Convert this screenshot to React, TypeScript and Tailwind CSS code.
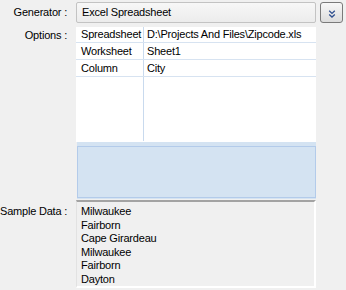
import * as React from 'react';

const rows = [
  { name: 'Spreadsheet', value: 'D:\\Projects And Files\\Zipcode.xls' },
  { name: 'Worksheet', value: 'Sheet1' },
  { name: 'Column', value: 'City' },
];

const samples = ['Milwaukee', 'Fairborn', 'Cape Girardeau', 'Milwaukee', 'Fairborn', 'Dayton'];

function ChevronsIcon() {
  return (
    <svg width="8" height="8" viewBox="0 0 8 8" fill="none">
      <polyline points="1.2,0.8 4,3.4 6.8,0.8" stroke="#2f4f8f" strokeWidth="1.3" />
      <polyline points="1.2,4.4 4,7 6.8,4.4" stroke="#2f4f8f" strokeWidth="1.3" />
    </svg>
  );
}

export default function App() {
  return (
    <div
      className="w-[346px] h-[290px] bg-[#f0f0f0] text-[11px] tracking-[-0.2px] text-black overflow-hidden whitespace-nowrap"
      style={{ fontFamily: '"Liberation Sans", Arial, sans-serif' }}
    >
      {/* Generator row */}
      <div className="flex items-center pt-[2px] h-[23px]">
        <div className="w-[76px] pr-[9px] text-right">Generator :</div>
        <div className="w-[240px] h-[21px] flex items-center pl-[5px] border border-[#c3c3c3] rounded-[2px] bg-gradient-to-b from-[#f7f7f7] to-[#ececec]">
          Excel Spreadsheet
        </div>
        <button className="ml-[4px] w-[23px] h-[21px] flex items-center justify-center pt-[2px] rounded-[3px] border border-[#7a7a7a] bg-gradient-to-b from-[#f8f8f8] to-[#dcdcdc]">
          <ChevronsIcon />
        </button>
      </div>

      {/* Options */}
      <div className="flex mt-[4px]">
        <div className="w-[76px] pr-[9px] text-right pt-[2px] leading-[13px]">Options :</div>
        <div className="w-[240px] flex flex-col">
          <div className="h-[115px] bg-white flex flex-col">
            {rows.map((r, i) => (
              <div
                key={r.name}
                className={`flex border-b border-[#d7e3f1] ${i === 0 ? 'h-[16px]' : 'h-[17px]'}`}
              >
                <div className="w-[68px] pl-[5px] border-r border-[#c9daee] flex items-center">{r.name}</div>
                <div className="flex-1 pl-[3px] flex items-center">{r.value}</div>
              </div>
            ))}
            <div className="flex flex-1">
              <div className="w-[68px] border-r border-[#c9daee] mb-[1px]" />
              <div className="flex-1" />
            </div>
          </div>
          <div className="h-[57px] ml-[1px] bg-[#d4e3f2] pt-[4px] pb-[1px]">
            <div className="h-full border border-[#b3cbea] bg-[#d4e3f2]" />
          </div>
        </div>
      </div>

      {/* Sample data */}
      <div className="flex mt-[1px]">
        <div className="w-[76px] pr-[9px] text-right pt-[5px] leading-[13px]">Sample Data :</div>
        <div className="w-[240px] h-[88px] border-t-2 border-t-[#a3a3a3] border-l border-l-[#e2e2e2] border-r-2 border-r-white border-b-2 border-b-white bg-[#f0f0f0] pl-[4px] pt-[3px]">
          {samples.map((s, i) => (
            <div key={i} className="leading-[13.5px]">{s}</div>
          ))}
        </div>
      </div>
    </div>
  );
}
